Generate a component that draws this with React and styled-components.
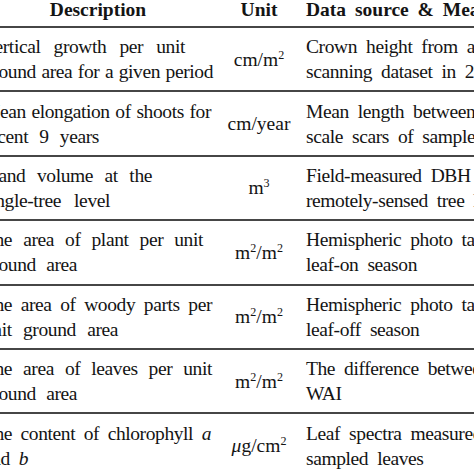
import React from 'react';
import styled, { createGlobalStyle } from 'styled-components';

const GlobalStyle = createGlobalStyle`
  html, body {
    margin: 0;
    padding: 0;
    background: #ffffff;
  }
`

const Page = styled.div`
  width: 474px;
  height: 474px;
  overflow: hidden;
  background: #ffffff;
  color: #141414;
  font-family: "Liberation Serif", "Times New Roman", serif;
`

const Table = styled.div`
  width: 760px;
  margin-left: -17px;
`

const Row = styled.div`
  display: grid;
  grid-template-columns: 230px 92px 1fr;
  align-items: center;
  height: ${p => (p.head ? '26px' : '62.4px')};
  border-bottom: 2px solid #464646;
`

const HeadCell = styled.div`
  align-self: start;
  font-size: 19.5px;
  font-weight: bold;
  line-height: 20px;
  white-space: nowrap;
  word-spacing: 4px;
  text-align: ${p => p.align || 'center'};
  padding-left: ${p => (p.align === 'left' ? '1px' : '0')};
`

const Desc = styled.div`
  font-size: 19.5px;
  line-height: 25px;
  letter-spacing: -0.4px;
`

const Line = styled.div`
  width: ${p => p.w}px;
  text-align: justify;
  text-align-last: justify;
`

const Unit = styled.div`
  font-size: 19.5px;
  line-height: 25px;
  text-align: center;
  white-space: nowrap;
`

const Source = styled.div`
  font-size: 19.5px;
  line-height: 25px;
  letter-spacing: -0.4px;
  word-spacing: 4.5px;
  white-space: nowrap;
  padding-left: 1px;
`

const Sup = styled.span`
  font-size: 0.62em;
  vertical-align: 0.6em;
  line-height: 0;
`

const I = styled.i`
  font-style: italic;
`

const rows = [
  {
    desc: [['Vertical growth per unit', 202], ['ground area for a given period', 230]],
    unit: <>cm/m<Sup>2</Sup></>,
    src: ['Crown height from airborne laser', 'scanning dataset in 2019 and 2020'],
  },
  {
    desc: [['Mean elongation of shoots for', 228], ['recent 9 years', 116]],
    unit: 'cm/year',
    src: ['Mean length between bud', 'scale scars of sampled shoots'],
  },
  {
    desc: [['Stand volume at the', 169], ['single-tree level', 127]],
    unit: <>m<Sup>3</Sup></>,
    src: ['Field-measured DBH and', 'remotely-sensed tree height'],
  },
  {
    desc: [['The area of plant per unit', 220], ['ground area', 94]],
    unit: <>m<Sup>2</Sup>/m<Sup>2</Sup></>,
    src: ['Hemispheric photo taken in', 'leaf-on season'],
  },
  {
    desc: [['The area of woody parts per', 229], ['unit ground area', 135]],
    unit: <>m<Sup>2</Sup>/m<Sup>2</Sup></>,
    src: ['Hemispheric photo taken in', 'leaf-off season'],
  },
  {
    desc: [['The area of leaves per unit', 229], ['ground area', 94]],
    unit: <>m<Sup>2</Sup>/m<Sup>2</Sup></>,
    src: ['The difference between PAI and', 'WAI'],
  },
  {
    desc: [[<>The content of chlorophyll <I>a</I></>, 228], [<>and <I>b</I></>, 45]],
    unit: <><I>μ</I>g/cm<Sup>2</Sup></>,
    src: ['Leaf spectra measured from', 'sampled leaves'],
  },
]

export default function App() {
  return (
    <Page>
      <GlobalStyle />
      <Table>
        <Row head>
          <HeadCell>Description</HeadCell>
          <HeadCell>Unit</HeadCell>
          <HeadCell align="left">Data source &amp; Measurement</HeadCell>
        </Row>
        {rows.map((r, i) => (
          <Row key={i}>
            <Desc>
              {r.desc.map(([text, w], j) => (
                <Line key={j} w={w}>{text}</Line>
              ))}
            </Desc>
            <Unit>{r.unit}</Unit>
            <Source>
              {r.src.map((s, j) => <div key={j}>{s}</div>)}
            </Source>
          </Row>
        ))}
      </Table>
    </Page>
  )
}
